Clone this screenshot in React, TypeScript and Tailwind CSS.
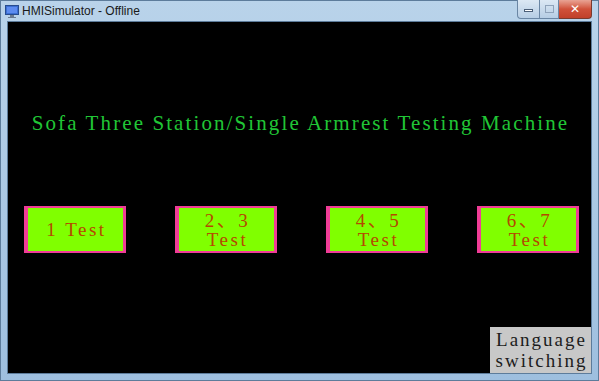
import React from "react";

const serif = { fontFamily: '"Liberation Serif", "Noto Sans CJK SC", serif' };

function TestButton({ lines }: { lines: string[] }) {
  return (
    <div className="flex h-[47px] w-[102px] flex-col items-center justify-center border-y-2 border-l-[4px] border-r-[3px] border-[#f03c96] bg-[#80ff00] text-[19px] leading-[19px] tracking-[2.5px] text-[#b44800]">
      {lines.map((line) => (
        <span key={line} className="pl-[2px]">
          {line}
        </span>
      ))}
    </div>
  );
}

export default function App() {
  return (
    <div className="flex h-[381px] w-[599px] flex-col bg-gradient-to-b from-[#b9d3ea] to-[#9ebfdf] shadow-[inset_0_0_0_1px_#5d7c9b]">
      <div className="flex h-[22px] items-start">
        <div className="flex items-center pl-[5px] pt-[4px]">
          <svg width="14" height="13" viewBox="0 0 14 13">
            <rect x="0.5" y="0.5" width="13" height="9" fill="#3b6fd2" stroke="#274c8f" />
            <rect x="2" y="2" width="10" height="6" fill="#5d8cf0" />
            <rect x="5" y="10" width="4" height="2" fill="#6b7b90" />
            <rect x="3" y="12" width="8" height="1" fill="#6b7b90" />
          </svg>
          <span className="ml-[3px] text-[12px] leading-[14px] text-[#1a1a1a]" style={{ fontFamily: '"Liberation Sans", sans-serif' }}>
            HMISimulator - Offline
          </span>
        </div>
        <div className="ml-auto mr-[7px] flex h-[19px]">
          <div className="flex w-[23px] items-center justify-center rounded-bl-[4px] border border-t-0 border-[#6a86a4] bg-gradient-to-b from-[#dce8f4] to-[#b6cde4]">
            <div className="mt-[3px] h-[3px] w-[9px] border border-[#4b5f78] bg-white" />
          </div>
          <div className="flex w-[19px] items-center justify-center border-y border-r border-t-0 border-[#6a86a4] bg-gradient-to-b from-[#dce8f4] to-[#b6cde4]">
            <div className="h-[8px] w-[9px] border border-[#8fa3ba] bg-transparent" />
          </div>
          <div className="flex w-[33px] items-center justify-center rounded-br-[4px] border border-l-0 border-t-0 border-[#7a3a2e] bg-gradient-to-b from-[#e8a394] via-[#d0513a] to-[#c1402a] text-[12px] font-bold text-white" style={{ fontFamily: '"DejaVu Sans", sans-serif' }}>
            ✕
          </div>
        </div>
      </div>
      <div className="mx-[8px] mb-[8px] flex flex-1 flex-col bg-black outline outline-1 outline-[#5d7c9b]" style={serif}>
        <div className="pl-[2px] pt-[90px] text-center text-[21px] leading-[22px] tracking-[2.1px] text-[#20c636]">
          Sofa Three Station/Single Armrest Testing Machine
        </div>
        <div className="mt-[72px] flex gap-[49px] pl-[16px]">
          <TestButton lines={["1 Test"]} />
          <TestButton lines={["2、3", "Test"]} />
          <TestButton lines={["4、5", "Test"]} />
          <TestButton lines={["6、7", "Test"]} />
        </div>
        <div className="mt-auto flex justify-end">
          <div className="flex h-[46px] w-[101px] flex-col items-center justify-center bg-[#c8c8c8] pl-[2px] text-[19px] leading-[21px] tracking-[2px] text-[#1c1c1c]">
            <span>Language</span>
            <span>switching</span>
          </div>
        </div>
      </div>
    </div>
  );
}
